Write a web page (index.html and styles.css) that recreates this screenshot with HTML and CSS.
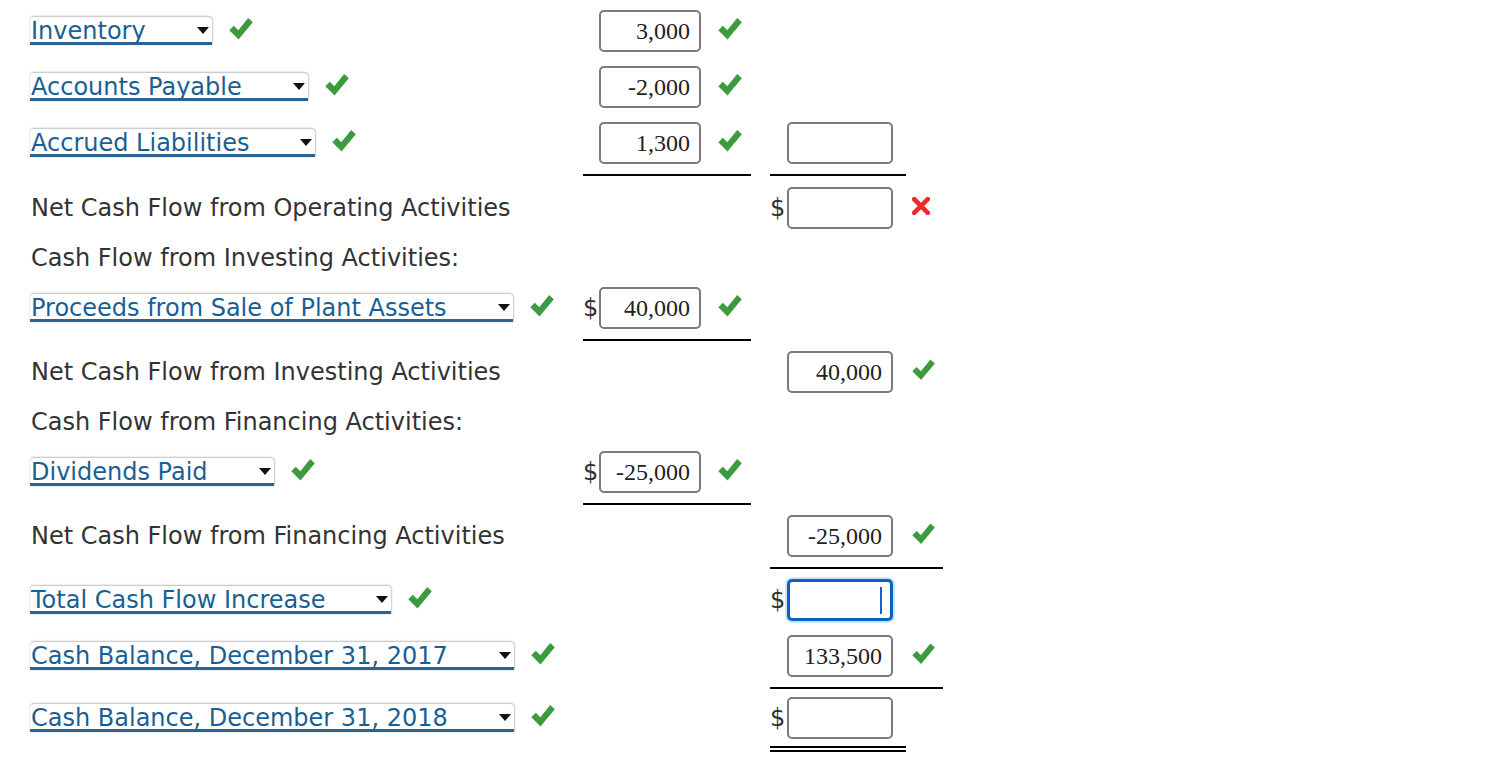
FILE: index.html
```html
<!DOCTYPE html>
<html lang="en">
<head>
<meta charset="utf-8">
<title>Statement of Cash Flows</title>
<link rel="stylesheet" href="styles.css">
</head>
<body>
<svg width="0" height="0" class="defs" aria-hidden="true">
  <defs>
    <symbol id="ok" viewBox="0 0 24 23">
      <path d="M0.3 13.2 L4.8 8.8 L9.3 13.2 L19.2 1 L23.8 5.2 L9.5 22.4 Z" fill="#3c9a3f"/>
    </symbol>
    <symbol id="bad" viewBox="0 0 18 18">
      <path d="M2.2 2.2 L15.8 15.8 M15.8 2.2 L2.2 15.8" stroke="#ec2a2a" stroke-width="4.6" stroke-linecap="square"/>
    </symbol>
    <symbol id="arr" viewBox="0 0 12 7">
      <path d="M0 0 H12 L6 7 Z" fill="#111"/>
    </symbol>
  </defs>
</svg>

<div class="sheet">
  <div class="row">
    <div class="label"><span class="sel">Inventory<svg class="arrow"><use href="#arr"/></svg></span><svg class="chk"><use href="#ok"/></svg></div>
    <div class="c2"><span class="cur"></span><div class="box">3,000</div><svg class="chk2"><use href="#ok"/></svg></div>
  </div>

  <div class="row">
    <div class="label"><span class="sel">Accounts Payable<svg class="arrow"><use href="#arr"/></svg></span><svg class="chk"><use href="#ok"/></svg></div>
    <div class="c2"><span class="cur"></span><div class="box">-2,000</div><svg class="chk2"><use href="#ok"/></svg></div>
  </div>

  <div class="row">
    <div class="label"><span class="sel">Accrued Liabilities<svg class="arrow"><use href="#arr"/></svg></span><svg class="chk"><use href="#ok"/></svg></div>
    <div class="c2 ul wide"><span class="cur"></span><div class="box">1,300</div><svg class="chk2"><use href="#ok"/></svg></div>
    <div class="c3 ul wide short"><span class="cur3"></span><div class="box3"></div></div>
  </div>

  <div class="row">
    <div class="label plain">Net Cash Flow from Operating Activities</div>
    <div class="c2"></div>
    <div class="c3"><span class="cur3">$</span><div class="box3"></div><svg class="x"><use href="#bad"/></svg></div>
  </div>

  <div class="row text">
    <div class="label plain">Cash Flow from Investing Activities:</div>
  </div>

  <div class="row">
    <div class="label"><span class="sel">Proceeds from Sale of Plant Assets<svg class="arrow"><use href="#arr"/></svg></span><svg class="chk"><use href="#ok"/></svg></div>
    <div class="c2 ul"><span class="cur">$</span><div class="box">40,000</div><svg class="chk2"><use href="#ok"/></svg></div>
  </div>

  <div class="row">
    <div class="label plain">Net Cash Flow from Investing Activities</div>
    <div class="c2"></div>
    <div class="c3"><span class="cur3"></span><div class="box3">40,000</div><svg class="chk3"><use href="#ok"/></svg></div>
  </div>

  <div class="row text">
    <div class="label plain">Cash Flow from Financing Activities:</div>
  </div>

  <div class="row">
    <div class="label"><span class="sel">Dividends Paid<svg class="arrow"><use href="#arr"/></svg></span><svg class="chk"><use href="#ok"/></svg></div>
    <div class="c2 ul"><span class="cur">$</span><div class="box">-25,000</div><svg class="chk2"><use href="#ok"/></svg></div>
  </div>

  <div class="row">
    <div class="label plain">Net Cash Flow from Financing Activities</div>
    <div class="c2"></div>
    <div class="c3 ul"><span class="cur3"></span><div class="box3">-25,000</div><svg class="chk3"><use href="#ok"/></svg></div>
  </div>

  <div class="row">
    <div class="label"><span class="sel">Total Cash Flow Increase<svg class="arrow"><use href="#arr"/></svg></span><svg class="chk"><use href="#ok"/></svg></div>
    <div class="c2"></div>
    <div class="c3"><span class="cur3">$</span><div class="box3 focus"><span class="caret"></span></div></div>
  </div>

  <div class="row">
    <div class="label"><span class="sel">Cash Balance, December 31, 2017<svg class="arrow"><use href="#arr"/></svg></span><svg class="chk"><use href="#ok"/></svg></div>
    <div class="c2"></div>
    <div class="c3 ul tight"><span class="cur3"></span><div class="box3">133,500</div><svg class="chk3"><use href="#ok"/></svg></div>
  </div>

  <div class="row">
    <div class="label"><span class="sel">Cash Balance, December 31, 2018<svg class="arrow"><use href="#arr"/></svg></span><svg class="chk"><use href="#ok"/></svg></div>
    <div class="c2"></div>
    <div class="c3 dbl short"><span class="cur3">$</span><div class="box3"></div></div>
  </div>
</div>
</body>
</html>
```

FILE: styles.css
```css
html, body {
  margin: 0;
  padding: 0;
  background: #fff;
}

.defs {
  position: absolute;
  width: 0;
  height: 0;
}

.sheet {
  display: flex;
  flex-direction: column;
  gap: 14px;
  padding: 10px 0 0 30px;
  font-family: "DejaVu Sans", Verdana, sans-serif;
  font-size: 24px;
  color: #333;
}

.row {
  display: flex;
  align-items: flex-start;
}

.row.text {
  height: 30px;
  align-items: center;
}

.row.text .label {
  height: 30px;
}

.label {
  width: 553px;
  height: 42px;
  display: flex;
  align-items: center;
  flex: none;
}

.plain {
  padding-left: 1px;
  box-sizing: border-box;
}

.sel {
  display: inline-flex;
  align-items: center;
  position: relative;
  height: 21px;
  padding: 4px 66px 0 1px;
  background: #fff;
  color: #1a5f94;
  border-radius: 4px 4px 0 0;
  border-bottom: 3px solid #2b6593;
  box-shadow: 0 -1px 2px rgba(0, 0, 0, 0.22), 1px 0 2px rgba(0, 0, 0, 0.16);
  line-height: 25px;
  white-space: nowrap;
}

.arrow {
  position: absolute;
  right: 3px;
  top: 10px;
  width: 12px;
  height: 7px;
}

.chk {
  width: 24px;
  height: 23px;
  margin-left: 17px;
  margin-top: -5px;
  flex: none;
}

.c2 {
  width: 168px;
  height: 42px;
  display: flex;
  align-items: center;
  flex: none;
}

.c3 {
  height: 42px;
  display: flex;
  align-items: center;
  margin-left: 19px;
  padding-right: 8px;
  flex: none;
}

.c3.short {
  padding-right: 13px;
}

.ul {
  padding-bottom: 10px;
  border-bottom: 2px solid #000;
  margin-bottom: -4px;
}

.ul.wide {
  margin-bottom: -3px;
}

.ul.tight {
  margin-bottom: -6px;
}

.dbl {
  padding-bottom: 7px;
  border-bottom: 6px double #000;
}

.cur {
  width: 16px;
  flex: none;
  color: #333;
}

.cur3 {
  width: 17px;
  flex: none;
  color: #333;
}

.box, .box3 {
  height: 42px;
  box-sizing: border-box;
  border: 2px solid #7b7b7b;
  border-radius: 5px;
  background: #fff;
  display: flex;
  align-items: center;
  justify-content: flex-end;
  padding-right: 9px;
  font-family: "Liberation Serif", "Times New Roman", serif;
  font-size: 24px;
  color: #222;
  flex: none;
}

.box {
  width: 102px;
}

.box3 {
  width: 106px;
}

.box3.focus {
  border: 3px solid #0b63c8;
  box-shadow: 0 0 0 2px rgba(130, 180, 240, 0.35);
  padding-right: 8px;
}

.caret {
  width: 2px;
  height: 27px;
  background: #1166c6;
}

.chk2 {
  width: 24px;
  height: 23px;
  margin-left: 17px;
  margin-top: -5px;
  flex: none;
}

.chk3 {
  width: 23px;
  height: 23px;
  margin-left: 19px;
  margin-top: -5px;
  flex: none;
}

.x {
  width: 18px;
  height: 18px;
  margin-left: 19px;
  margin-right: 5px;
  margin-top: -4px;
  flex: none;
}
```
